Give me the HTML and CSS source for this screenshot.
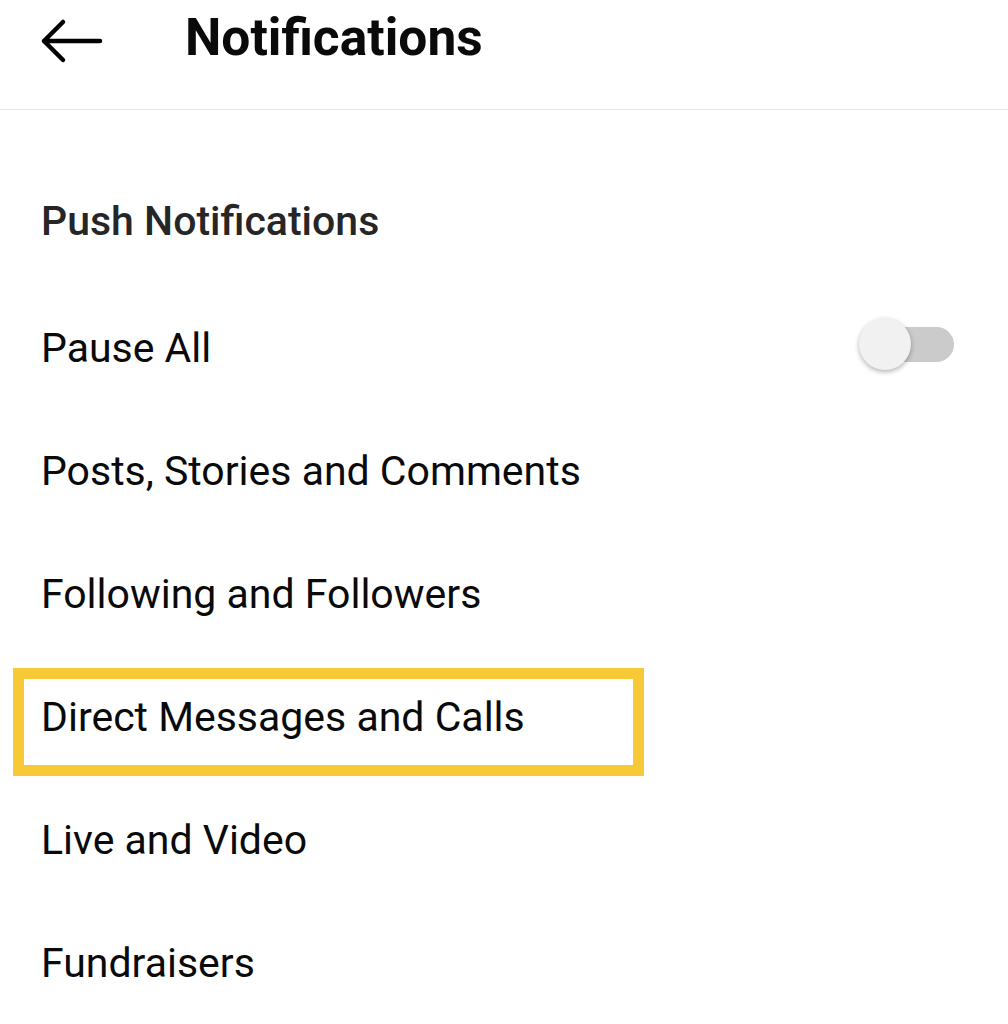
FILE: index.html
```html
<!DOCTYPE html>
<html lang="en">
<head>
  <meta charset="UTF-8" />
  <title>Notifications</title>
  <meta name="viewport" content="width=device-width, initial-scale=1.0" />
  <link rel="stylesheet" href="styles.css">
</head>
<body>
  <header class="top-bar">
    <svg class="back-icon" width="64" height="48" viewBox="0 0 64 48" aria-label="Back">
      <path d="M4 24H60M23 5L4 24L23 43" fill="none" stroke="#000" stroke-width="4.5" stroke-linecap="round" stroke-linejoin="round"/>
    </svg>
    <h1 class="title">Notifications</h1>
  </header>

  <main class="settings">
    <h2 class="section-title">Push Notifications</h2>

    <ul class="list">
      <li class="row">
        <span>Pause All</span>
        <span class="switch"><span class="knob"></span></span>
      </li>
      <li class="row">Posts, Stories and Comments</li>
      <li class="row">Following and Followers</li>
      <li class="row highlighted">Direct Messages and Calls</li>
      <li class="row">Live and Video</li>
      <li class="row">Fundraisers</li>
    </ul>
  </main>
</body>
</html>
```

FILE: styles.css
```css
:root {
  --text: #0a0a0a;
  --heading: #262626;
  --divider: #e6e6e6;
  --highlight: #f8c937;
  --row-height: 123px;
}

body {
  margin: 0;
  background: #fff;
  font-family: Roboto, "Liberation Sans", sans-serif;
  color: var(--text);
  width: 1008px;
  height: 1024px;
  overflow: hidden;
}

.top-bar {
  display: flex;
  align-items: flex-start;
  height: 110px;
  box-sizing: border-box;
  padding-left: 40px;
  border-bottom: 1px solid var(--divider);
}

.back-icon {
  margin-top: 17px;
  flex-shrink: 0;
}

.title {
  margin: 8px 0 0 81px;
  font-size: 51.5px;
  line-height: 60px;
  font-weight: 700;
}

.settings {
  padding: 50px 54px 0 41px;
}

.section-title {
  margin: 0;
  font-size: 41px;
  line-height: var(--row-height);
  font-weight: 500;
  color: var(--heading);
}

.list {
  list-style: none;
  margin: 4px 0 0;
  padding: 0;
}

.row {
  position: relative;
  display: flex;
  align-items: center;
  justify-content: space-between;
  height: var(--row-height);
  font-size: 41px;
  line-height: var(--row-height);
}

.highlighted::before {
  content: "";
  position: absolute;
  left: -28px;
  top: 12px;
  width: 631px;
  height: 108px;
  box-sizing: border-box;
  border: 11px solid var(--highlight);
}

.switch {
  position: relative;
  display: block;
  width: 84px;
  height: 35px;
  margin-top: -8px;
  border-radius: 18px;
  background: #cbcbcb;
}

.knob {
  position: absolute;
  left: -11px;
  top: -9px;
  width: 52px;
  height: 52px;
  border-radius: 50%;
  background: #f1f1f1;
  box-shadow: 0 2px 5px rgba(0, 0, 0, 0.3);
}
```
